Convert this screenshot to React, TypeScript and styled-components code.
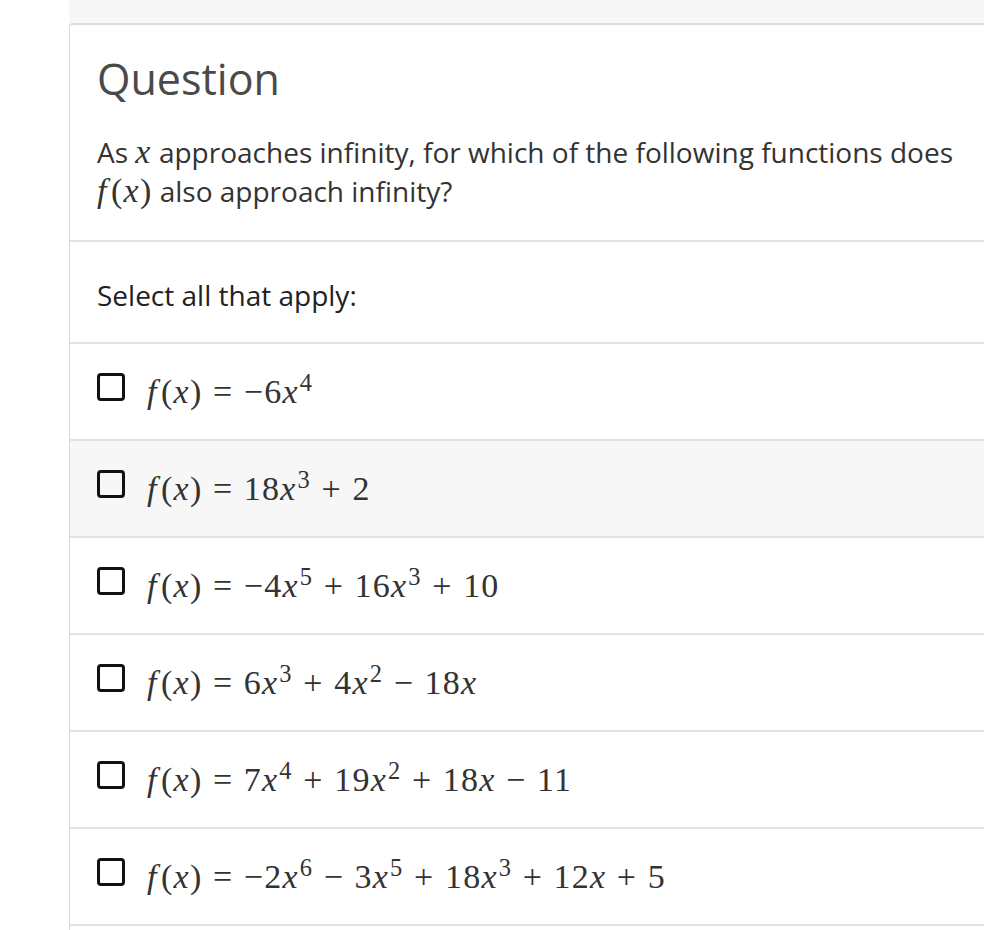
import React from "react";
import styled, { createGlobalStyle } from "styled-components";

const GlobalStyle = createGlobalStyle`
  body {
    margin: 0;
    background: #fff;
    font-family: "Open Sans", "Liberation Sans", sans-serif;
    overflow: hidden;
  }
`;

const Page = styled.div`
  display: flex;
  min-height: 100vh;
`;

const Gutter = styled.div`
  width: 69px;
  flex-shrink: 0;
`;

const Main = styled.main`
  flex: 1;
  min-width: 0;
  background: #f7f7f7;
  padding-top: 23px;
`;

const Card = styled.section`
  margin-right: -24px;
  background: #fff;
  border: 1px solid #dcdcdc;
  border-top-width: 2px;
  border-radius: 4px 0 0 0;
`;

const Header = styled.div`
  padding: 29px 28px 29px 27px;
`;

const Title = styled.h2`
  margin: 0 0 29px;
  font-size: 43px;
  font-weight: 400;
  line-height: 50px;
  color: #4a4a4a;
`;

const Prompt = styled.p`
  margin: 0;
  font-size: 28px;
  line-height: 39px;
  color: #333;
`;

const Instruction = styled.div`
  border-top: 2px solid #e2e2e2;
  padding: 34px 27px 27px;
  font-size: 28px;
  line-height: 39px;
  color: #222;
`;

const Option = styled.label<{ $active?: boolean }>`
  display: flex;
  align-items: center;
  box-sizing: border-box;
  height: 97px;
  padding-left: 27px;
  border-top: 2px solid #e2e2e2;
  background: ${(p) => (p.$active ? "#f7f7f7" : "#fff")};
  cursor: pointer;
`;

const Box = styled.span`
  box-sizing: border-box;
  width: 28px;
  height: 28px;
  margin-bottom: 10px;
  border: 3px solid #111;
  border-radius: 4px;
  flex-shrink: 0;
`;

const MathText = styled.span<{ $inRow?: boolean }>`
  font-family: "Liberation Serif", "Times New Roman", serif;
  font-size: 34px;
  line-height: 1;
  color: #333;
  letter-spacing: 1.2px;
  white-space: nowrap;
  margin-left: ${(p) => (p.$inRow ? "22px" : "0")};
`;

const Var = styled.i<{ $f?: boolean }>`
  font-family: "Liberation Serif", "Times New Roman", serif;
  font-style: italic;
  padding-right: ${(p) => (p.$f ? "0.1em" : "0")};
`;

const Op = styled.span<{ $unary?: boolean }>`
  margin: 0 ${(p) => (p.$unary ? "0" : "0.31em")};
`;

const Sup = styled.sup`
  font-size: 0.72em;
  line-height: 0;
  vertical-align: 12px;
  margin-left: 1px;
`;

const Fx = () => (
  <>
    <Var $f>f</Var>(<Var>x</Var>)
  </>
);

const X = ({ p }: { p?: number }) => (
  <>
    <Var>x</Var>
    {p ? <Sup>{p}</Sup> : null}
  </>
);

const options: React.ReactNode[] = [
  <>
    <Fx />
    <Op>=</Op>
    <Op $unary>−</Op>6<X p={4} />
  </>,
  <>
    <Fx />
    <Op>=</Op>18<X p={3} />
    <Op>+</Op>2
  </>,
  <>
    <Fx />
    <Op>=</Op>
    <Op $unary>−</Op>4<X p={5} />
    <Op>+</Op>16<X p={3} />
    <Op>+</Op>10
  </>,
  <>
    <Fx />
    <Op>=</Op>6<X p={3} />
    <Op>+</Op>4<X p={2} />
    <Op>−</Op>18<X />
  </>,
  <>
    <Fx />
    <Op>=</Op>7<X p={4} />
    <Op>+</Op>19<X p={2} />
    <Op>+</Op>18<X />
    <Op>−</Op>11
  </>,
  <>
    <Fx />
    <Op>=</Op>
    <Op $unary>−</Op>2<X p={6} />
    <Op>−</Op>3<X p={5} />
    <Op>+</Op>18<X p={3} />
    <Op>+</Op>12<X />
    <Op>+</Op>5
  </>,
];

export default function App() {
  return (
    <>
      <GlobalStyle />
      <Page>
        <Gutter />
        <Main>
          <Card>
            <Header>
              <Title>Question</Title>
              <Prompt>
                As{" "}
                <MathText>
                  <Var>x</Var>
                </MathText>{" "}
                approaches infinity, for which of the following functions does{" "}
                <MathText>
                  <Fx />
                </MathText>{" "}
                also approach infinity?
              </Prompt>
            </Header>
            <Instruction>Select all that apply:</Instruction>
            {options.map((content, i) => (
              <Option key={i} $active={i === 1}>
                <Box />
                <MathText $inRow>{content}</MathText>
              </Option>
            ))}
            <Option />
          </Card>
        </Main>
      </Page>
    </>
  );
}
